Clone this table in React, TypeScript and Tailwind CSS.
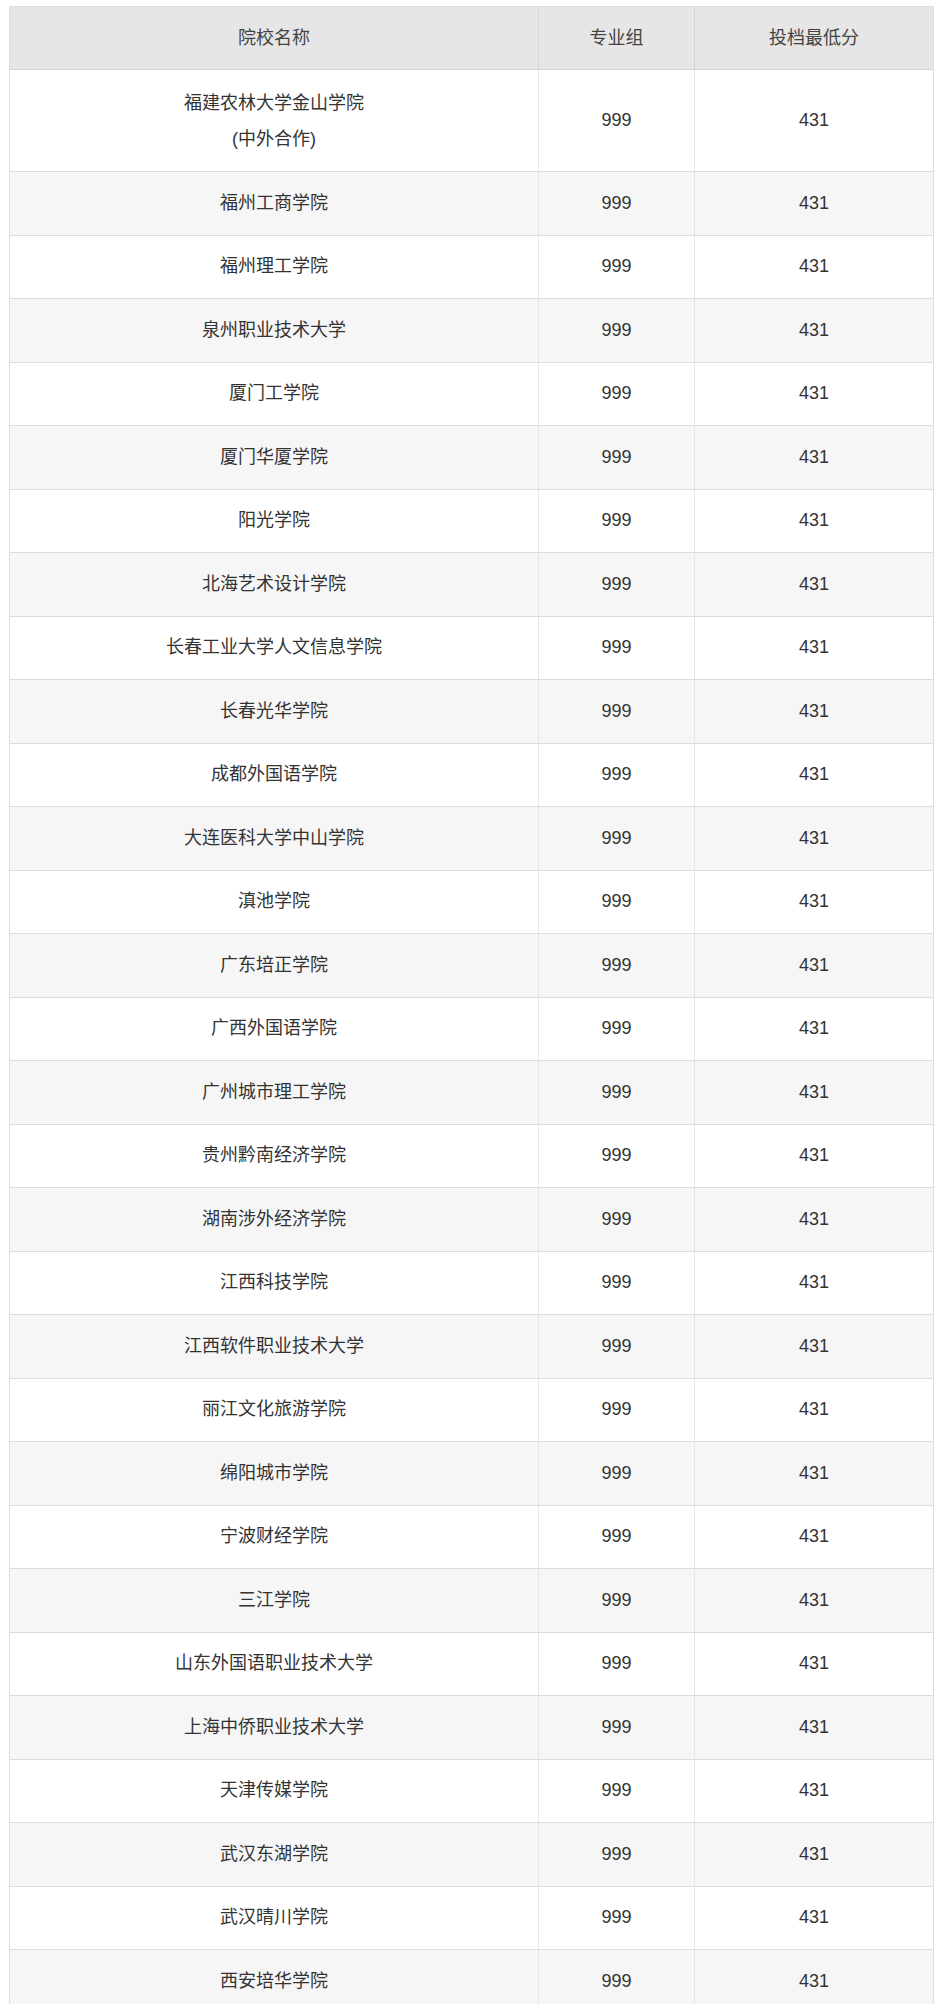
import React from "react";

const names = [
  "福州工商学院",
  "福州理工学院",
  "泉州职业技术大学",
  "厦门工学院",
  "厦门华厦学院",
  "阳光学院",
  "北海艺术设计学院",
  "长春工业大学人文信息学院",
  "长春光华学院",
  "成都外国语学院",
  "大连医科大学中山学院",
  "滇池学院",
  "广东培正学院",
  "广西外国语学院",
  "广州城市理工学院",
  "贵州黔南经济学院",
  "湖南涉外经济学院",
  "江西科技学院",
  "江西软件职业技术大学",
  "丽江文化旅游学院",
  "绵阳城市学院",
  "宁波财经学院",
  "三江学院",
  "山东外国语职业技术大学",
  "上海中侨职业技术大学",
  "天津传媒学院",
  "武汉东湖学院",
  "武汉晴川学院",
  "西安培华学院",
];

export default function App() {
  return (
    <div
      className="min-h-[2004px] bg-white pt-[6px] pl-[9px] text-[18px] text-[#333]"
      style={{ fontFamily: '"Liberation Sans", "Noto Sans CJK SC", sans-serif' }}
    >
      <div className="w-[925px] border border-[#dddddd]">
        <div className="grid h-[63px] grid-cols-[529px_156px_238px] border-b border-[#d6d6d6] bg-[#e6e6e6] text-[#444]">
          <div className="flex items-center justify-center border-r border-[#d6d6d6]">院校名称</div>
          <div className="flex items-center justify-center border-r border-[#d6d6d6]">专业组</div>
          <div className="flex items-center justify-center">投档最低分</div>
        </div>
        <div className="grid h-[102px] grid-cols-[529px_156px_238px] border-b border-[#dddddd] bg-white">
          <div className="flex flex-col items-center justify-center border-r border-[#e6e6e6] leading-[36px]">
            <span>福建农林大学金山学院</span>
            <span>(中外合作)</span>
          </div>
          <div className="flex items-center justify-center border-r border-[#e6e6e6]">999</div>
          <div className="flex items-center justify-center">431</div>
        </div>
        {names.map((n, i) => (
          <div
            key={n}
            className={
              "grid h-[63.5px] grid-cols-[529px_156px_238px] border-b border-[#dddddd] " +
              (i % 2 === 0 ? "bg-[#f6f6f6]" : "bg-white")
            }
          >
            <div className="flex items-center justify-center border-r border-[#e6e6e6]">{n}</div>
            <div className="flex items-center justify-center border-r border-[#e6e6e6]">999</div>
            <div className="flex items-center justify-center">431</div>
          </div>
        ))}
      </div>
    </div>
  );
}
